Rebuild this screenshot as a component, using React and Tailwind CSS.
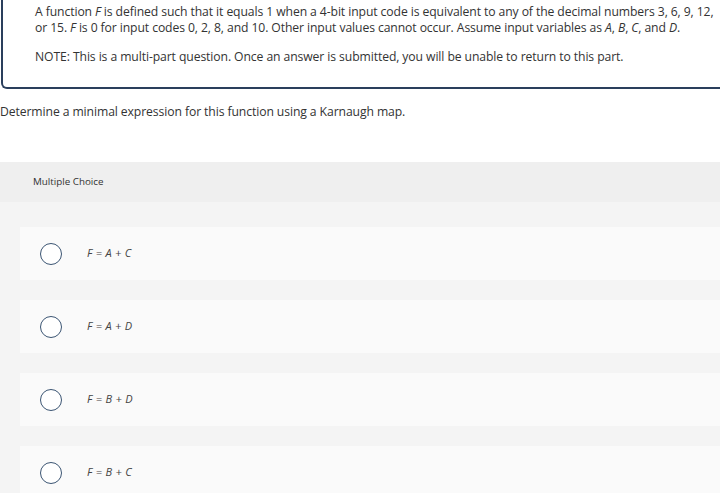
import React from 'react';

const OPTIONS = [
  ['F', 'A', 'C'],
  ['F', 'A', 'D'],
  ['F', 'B', 'D'],
  ['F', 'B', 'C'],
];

function Choice({ terms }) {
  return (
    <div className="flex h-[53px] items-center bg-[#fafafa] pl-[20px]">
      <span className="block h-[22px] w-[22px] rounded-full border-[1.5px] border-[#3b5573] bg-white" />
      <span className="ml-[25px] text-[11px] italic tracking-[0.3px] text-[#444]">
        {terms[0]} = {terms[1]} + {terms[2]}
      </span>
    </div>
  );
}

export default function App() {
  return (
    <div className="h-[493px] w-[720px] overflow-hidden bg-white text-[#333]" style={{ fontFamily: '"Open Sans", "Liberation Sans", sans-serif' }}>
      <div className="ml-px mt-[-10px] h-[99px] w-[730px] rounded-bl-[6px] border-b-2 border-l-2 border-[#2a3f5c] pl-[32px] pt-[14px] text-[12.2px] leading-[16px] tracking-[-0.1px]">
        <p>
          A function <i>F</i> is defined such that it equals 1 when a 4-bit input code is equivalent to any of the decimal numbers 3, 6, 9, 12,
          <br />
          or 15. <i>F</i> is 0 for input codes 0, 2, 8, and 10. Other input values cannot occur. Assume input variables as <i>A</i>, <i>B</i>, <i>C</i>, and <i>D</i>.
        </p>
        <p className="mt-[13px]">NOTE: This is a multi-part question. Once an answer is submitted, you will be unable to return to this part.</p>
      </div>

      <p className="mt-[15px] text-[12.2px] leading-[16px] tracking-[-0.1px]">Determine a minimal expression for this function using a Karnaugh map.</p>

      <div className="mt-[42px] flex h-[40px] items-center bg-[#efefef] pl-[33px] text-[9.8px] text-[#333]">Multiple Choice</div>

      <div className="flex flex-col gap-[20px] bg-[#f4f4f4] pl-[20px] pt-[25px] pb-[20px]">
        {OPTIONS.map((t, i) => (
          <Choice key={i} terms={t} />
        ))}
      </div>
    </div>
  );
}
